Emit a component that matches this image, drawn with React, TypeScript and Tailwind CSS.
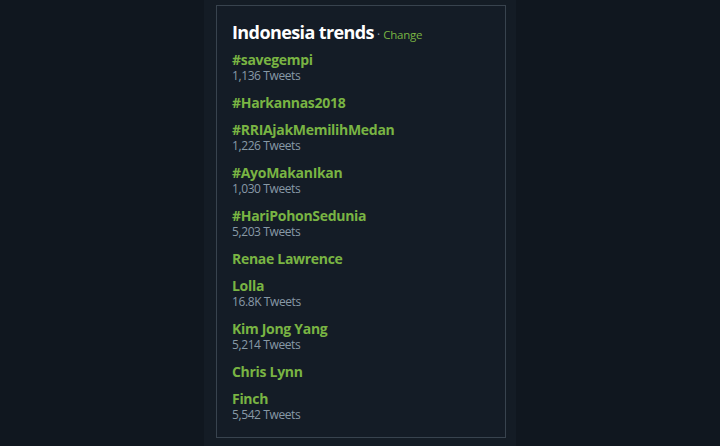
const trends = [
  { name: "#savegempi", count: "1,136 Tweets" },
  { name: "#Harkannas2018" },
  { name: "#RRIAjakMemilihMedan", count: "1,226 Tweets" },
  { name: "#AyoMakanIkan", count: "1,030 Tweets" },
  { name: "#HariPohonSedunia", count: "5,203 Tweets" },
  { name: "Renae Lawrence" },
  { name: "Lolla", count: "16.8K Tweets" },
  { name: "Kim Jong Yang", count: "5,214 Tweets" },
  { name: "Chris Lynn" },
  { name: "Finch", count: "5,542 Tweets" },
];

export default function App() {
  return (
    <div
      className="w-[720px] h-[446px] bg-[#10171f] flex justify-center overflow-hidden"
      style={{ fontFamily: '"Open Sans", "Noto Sans", sans-serif' }}
    >
      <div className="w-[312px] h-full bg-[#141c25] pl-[12px] pr-[10px] pt-[5px]">
        {/* Trends card */}
        <div className="h-[433px] border border-[#38434e] bg-[#141c26] px-[15px] pt-[14px]">
          <div className="flex items-baseline h-[24px]">
            <h2 className="text-[18px] font-bold text-white leading-[24px] tracking-[-0.6px]">
              Indonesia trends
            </h2>
            <span className="text-[12px] text-[#8899a6] mx-[3px]">·</span>
            <span className="text-[11.5px] text-[#79b443] tracking-[-0.2px]">Change</span>
          </div>

          <ul className="mt-[8px] flex flex-col gap-[11px]">
            {trends.map((t) => (
              <li key={t.name}>
                <div className="text-[14px] font-bold text-[#79b443] leading-[16px] tracking-[-0.3px]">
                  {t.name}
                </div>
                {t.count && (
                  <div className="text-[12px] text-[#8899a6] leading-[16px] tracking-[-0.4px]">
                    {t.count}
                  </div>
                )}
              </li>
            ))}
          </ul>
        </div>
      </div>
    </div>
  );
}
